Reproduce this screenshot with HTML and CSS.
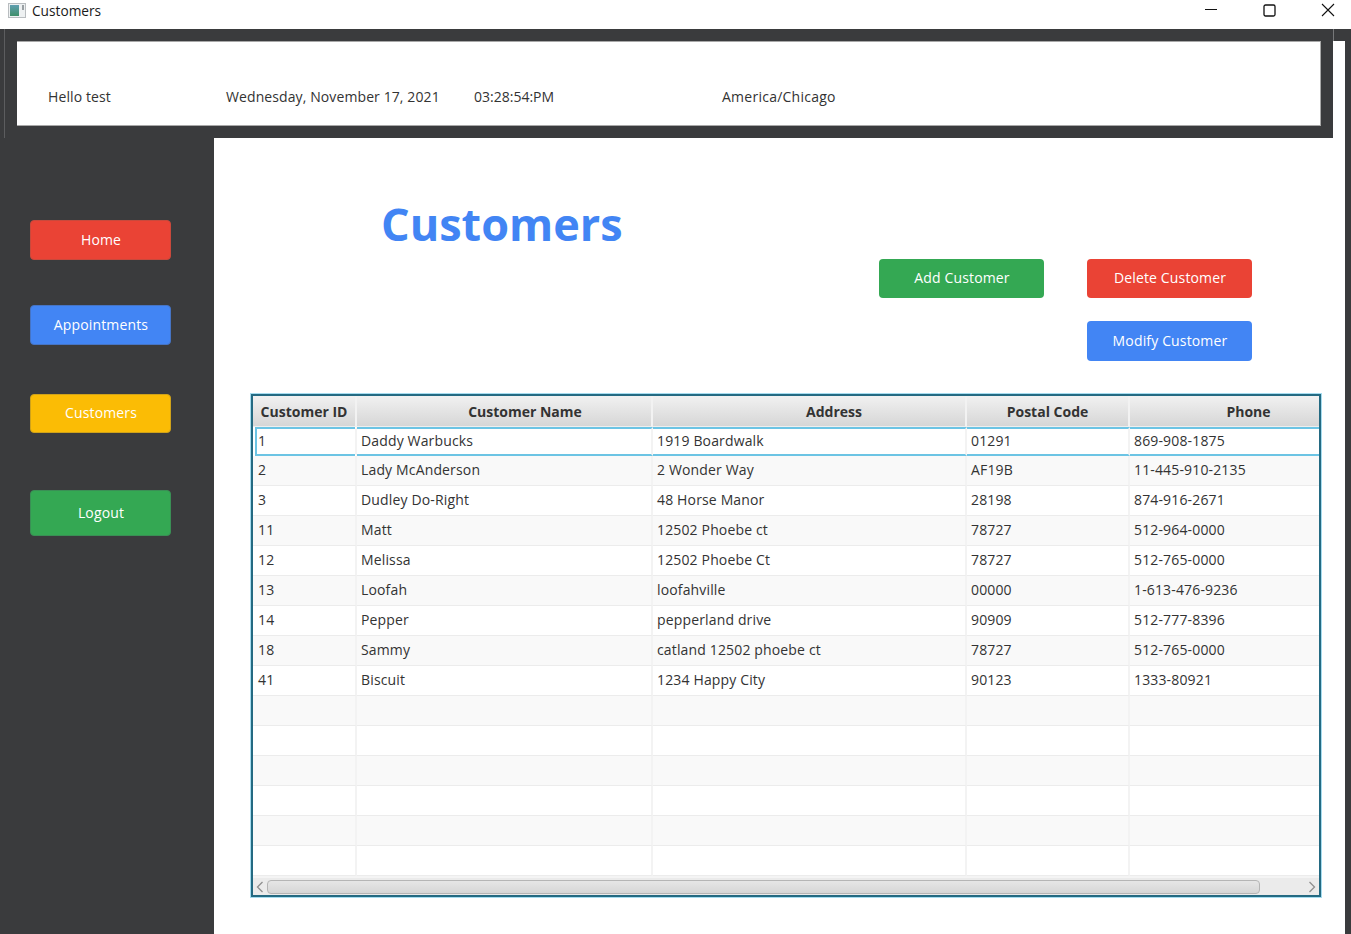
FILE: index.html
```html
<!DOCTYPE html>
<html lang="en">
<head>
<meta charset="utf-8">
<title>Customers</title>
<link rel="stylesheet" href="styles.css">
</head>
<body>
<div class="titlebar">
  <svg class="app-icon" width="18" height="15" viewBox="0 0 18 15">
    <defs><linearGradient id="appfill" x1="0" y1="0" x2="0" y2="1"><stop offset="0" stop-color="#5f9fb0"/><stop offset="1" stop-color="#3f8f6a"/></linearGradient></defs>
    <rect x="0.5" y="0.5" width="17" height="14" fill="#eef1f2" stroke="#b9bdc0"/>
    <rect x="2" y="2" width="9" height="11" fill="url(#appfill)"/>
    <rect x="14" y="2" width="2" height="5" fill="#9aa0a4"/>
  </svg>
  <span class="window-title">Customers</span>
  <div class="window-controls">
    <svg width="12" height="2" viewBox="0 0 12 2" class="ctl-min"><path d="M0 .5H12" stroke="#111" stroke-width="1"/></svg>
    <svg width="13" height="13" viewBox="0 0 13 13" class="ctl-max"><rect x="1" y="1" width="11" height="11" rx="1.5" fill="none" stroke="#111" stroke-width="1.3"/></svg>
    <svg width="14" height="14" viewBox="0 0 14 14" class="ctl-close"><path d="M1 1L13 13M13 1L1 13" stroke="#111" stroke-width="1.1"/></svg>
  </div>
</div>
<div class="stage">
  <div class="canvas">
    <header class="header">
      <div class="header-inner">
        <div class="header-box">
          <span class="h-hello">Hello test</span>
          <span class="h-date">Wednesday, November 17, 2021</span>
          <span class="h-time">03:28:54:PM</span>
          <span class="h-zone">America/Chicago</span>
        </div>
      </div>
    </header>
    <div class="edge"></div>
    <nav class="sidebar">
      <button class="btn red nav-home">Home</button>
      <button class="btn blue nav-appt">Appointments</button>
      <button class="btn yellow nav-cust">Customers</button>
      <button class="btn green nav-logout">Logout</button>
    </nav>
    <main class="content">
      <div class="top">
        <h1 class="page-title">Customers</h1>
        <div class="actions">
          <button class="btn green act">Add Customer</button>
          <button class="btn red act">Delete Customer</button>
          <button class="btn blue act act-modify">Modify Customer</button>
        </div>
      </div>
      <div class="table-wrap">
        <table class="grid">
          <colgroup><col class="c1"><col class="c2"><col class="c3"><col class="c4"><col class="c5"></colgroup>
          <thead><tr><th>Customer ID</th><th class="th-name">Customer Name</th><th class="th-addr">Address</th><th>Postal Code</th><th class="th-phone">Phone</th></tr></thead>
          <tbody>
            <tr class="focused"><td>1</td><td>Daddy Warbucks</td><td>1919 Boardwalk</td><td>01291</td><td>869-908-1875</td></tr>
            <tr><td>2</td><td>Lady McAnderson</td><td>2 Wonder Way</td><td>AF19B</td><td>11-445-910-2135</td></tr>
            <tr><td>3</td><td>Dudley Do-Right</td><td>48 Horse Manor</td><td>28198</td><td>874-916-2671</td></tr>
            <tr><td>11</td><td>Matt</td><td>12502 Phoebe ct</td><td>78727</td><td>512-964-0000</td></tr>
            <tr><td>12</td><td>Melissa</td><td>12502 Phoebe Ct</td><td>78727</td><td>512-765-0000</td></tr>
            <tr><td>13</td><td>Loofah</td><td>loofahville</td><td>00000</td><td>1-613-476-9236</td></tr>
            <tr><td>14</td><td>Pepper</td><td>pepperland drive</td><td>90909</td><td>512-777-8396</td></tr>
            <tr><td>18</td><td>Sammy</td><td>catland 12502 phoebe ct</td><td>78727</td><td>512-765-0000</td></tr>
            <tr><td>41</td><td>Biscuit</td><td>1234 Happy City</td><td>90123</td><td>1333-80921</td></tr>
            <tr><td></td><td></td><td></td><td></td><td></td></tr>
            <tr><td></td><td></td><td></td><td></td><td></td></tr>
            <tr><td></td><td></td><td></td><td></td><td></td></tr>
            <tr><td></td><td></td><td></td><td></td><td></td></tr>
            <tr><td></td><td></td><td></td><td></td><td></td></tr>
            <tr><td></td><td></td><td></td><td></td><td></td></tr>
          </tbody>
        </table>
        <div class="scrollbar">
          <svg width="8" height="12" viewBox="0 0 8 12"><path d="M6.5 1L1.5 6L6.5 11" fill="none" stroke="#8f8f8f" stroke-width="1.3"/></svg>
          <div class="thumb"></div>
          <svg class="arrow-right" width="8" height="12" viewBox="0 0 8 12"><path d="M1.5 1L6.5 6L1.5 11" fill="none" stroke="#8f8f8f" stroke-width="1.3"/></svg>
        </div>
      </div>
    </main>
  </div>
</div>
</body>
</html>
```
FILE: styles.css
```css
* { box-sizing: border-box; }
html, body { margin: 0; height: 100%; overflow: hidden; }
body { background: #fff; font-family: "Open Sans", "Noto Sans", sans-serif; font-size: 14px; color: #333; }

.titlebar { height: 29px; display: flex; align-items: flex-start; background: #fff; }
.app-icon { margin: 3px 0 0 8px; }
.window-title { margin: 2px 0 0 6px; font-size: 13.7px; color: #1a1a1a; line-height: 18px; }
.window-controls { margin-left: auto; display: flex; align-items: flex-start; }
.ctl-min { margin: 9px 0 0 0; }
.ctl-max { margin: 4px 0 0 46px; }
.ctl-close { margin: 3px 16px 0 45px; }

.stage { height: 905px; background: #3a3b3d; padding-right: 6px; }
.canvas { height: 100%; background: #fff; display: grid; grid-template-columns: 214px 1119px 12px; grid-template-rows: 109px 796px; }

.header { grid-column: 1 / 3; grid-row: 1; background: #3a3b3d; padding-left: 4px; display: flex; }
.header-inner { flex: 1; border-left: 1px solid #5c5d5f; padding: 12px; display: flex; }
.header-box { flex: 1; background: #fff; border: 1px solid #a8a8a8; border-left: 0; display: flex; align-items: flex-end; padding: 0 0 19px 31px; color: #333; line-height: 18px; letter-spacing: .1px; }
.h-hello { width: 178px; }
.h-date { width: 248px; }
.h-time { width: 248px; letter-spacing: 0; }
.h-zone { letter-spacing: .25px; }

.edge { grid-column: 3; grid-row: 1; height: 12px; background: #3a3b3d; border-left: 1px solid #77787a; }

.sidebar { grid-column: 1; grid-row: 2; background: #3a3b3d; display: flex; flex-direction: column; align-items: flex-start; padding: 82px 0 0 30px; }

.btn { width: 141px; height: 40px; border: 1px solid transparent; border-radius: 4px; color: #fff; font: inherit; font-size: 14px; letter-spacing: .15px; padding: 0 0 2px 1px; display: block; }
.red { background: #ea4335; }
.blue { background: #4285f4; }
.yellow { background: #fbbc05; }
.green { background: #34a853; }
.sidebar .red { border-color: #c9493c; }
.sidebar .blue { border-color: #4674c4; }
.sidebar .yellow { border-color: #cfa21a; }
.sidebar .green { border-color: #3a8f55; }
.nav-appt { margin-top: 45px; }
.nav-cust { margin-top: 49px; height: 39px; }
.nav-logout { margin-top: 57px; height: 46px; }

.content { grid-column: 2 / 4; grid-row: 2; padding-left: 36px; display: flex; flex-direction: column; }
.top { height: 256px; display: flex; align-items: flex-start; }
.page-title { margin: 56px 0 0 131px; font-size: 45px; line-height: 60px; font-weight: 700; color: #4285f4; width: 498px; letter-spacing: 0; }
.actions { margin-top: 121px; display: grid; grid-template-columns: 165px 165px; column-gap: 43px; row-gap: 23px; grid-auto-rows: min-content; }
.act { width: 165px; height: 39px; }
.act-modify { grid-column: 2; height: 40px; }

.table-wrap { width: 1070px; height: 503px; border: 2px solid #246a82; box-shadow: 0 0 0 1px #a6dcef; margin-left: 1px; background: #fff; }
.grid { border-collapse: separate; border-spacing: 0; table-layout: fixed; width: 1066px; }
.c1 { width: 104px; } .c2 { width: 296px; } .c3 { width: 314px; } .c4 { width: 163px; } .c5 { width: 189px; }
.grid th { height: 31px; padding: 0; font-size: 14px; font-weight: 700; text-align: center; color: #333; background: linear-gradient(#f1f1f1, #d6d6d6); border-right: 2px solid #f2f2f2; border-bottom: 1px solid #eeeeee; }
.grid th:last-child { border-right: 0; }
.th-name { padding-left: 42px !important; }
.th-addr { padding-left: 50px !important; }
.th-phone { padding-left: 48px !important; }
.grid td { height: 30px; padding: 0 0 1px 4px; background: #fff; border-right: 2px solid #f3f3f3; border-bottom: 1px solid #ececec; line-height: 20px; white-space: nowrap; letter-spacing: .15px; }
.grid td:first-child { padding-left: 5px; }
.grid td:last-child { border-right: 0; }
.grid tbody tr:nth-child(even) td { background: #f9f9f9; }
.grid tr.focused td { height: 29px; padding-bottom: 2px; border-top: 2px solid #6cc4e4; border-bottom: 2px solid #6cc4e4; }
.grid tr.focused td:first-child { position: relative; border-top-color: #fff; border-bottom-color: #fff; }
.grid tr.focused td:first-child::before { content: ""; position: absolute; top: -2px; right: 0; bottom: -2px; left: 2px; border: 2px solid #6cc4e4; border-right: 0; }

.scrollbar { height: 19px; background: #ebebeb; display: flex; align-items: center; padding: 0 3px; gap: 3px; border-top: 2px solid #f4f4f4; }
.thumb { width: 993px; height: 14px; border: 1px solid #b5b5b5; border-radius: 4px; background: linear-gradient(#e6e6e6, #d6d6d6); }
.arrow-right { margin-left: auto; }
```
